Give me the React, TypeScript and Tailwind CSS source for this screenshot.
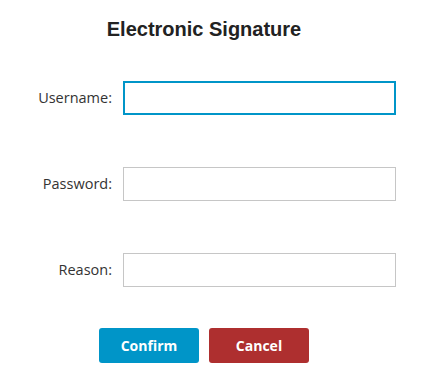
export default function App() {
  const rows = [
    { label: 'Username:', focus: true },
    { label: 'Password:', focus: false },
    { label: 'Reason:', focus: false },
  ];

  return (
    <div className="w-[425px] h-[378px] bg-white pt-[17px]" style={{ fontFamily: '"Open Sans", sans-serif' }}>
      <h1
        className="text-center text-[20px] font-bold text-[#222] leading-[24px] pr-[17px]"
        style={{ fontFamily: '"Liberation Sans", Arial, sans-serif' }}
      >
        Electronic Signature
      </h1>

      <div className="mt-[40px] flex flex-col gap-[52px]">
        {rows.map((r) => (
          <div key={r.label} className="flex items-center">
            <label className="w-[112px] text-right text-[14.5px] font-medium text-[#333] leading-[20px] -mt-[1px]">
              {r.label}
            </label>
            <input
              type={r.label === 'Password:' ? 'password' : 'text'}
              className={
                r.focus
                  ? 'ml-[11px] w-[273px] h-[34px] border-2 border-[#0095c8] bg-white outline-none'
                  : 'ml-[11px] w-[273px] h-[34px] border border-[#c6c6c6] bg-white outline-none'
              }
            />
          </div>
        ))}
      </div>

      <div className="mt-[41px] flex gap-[10px] pl-[99px]">
        <button className="w-[100px] h-[35px] rounded-[3px] bg-[#0095c8] text-white text-[14px] font-bold">
          Confirm
        </button>
        <button className="w-[100px] h-[35px] rounded-[3px] bg-[#ae2f2f] text-white text-[14px] font-bold">
          Cancel
        </button>
      </div>
    </div>
  );
}
